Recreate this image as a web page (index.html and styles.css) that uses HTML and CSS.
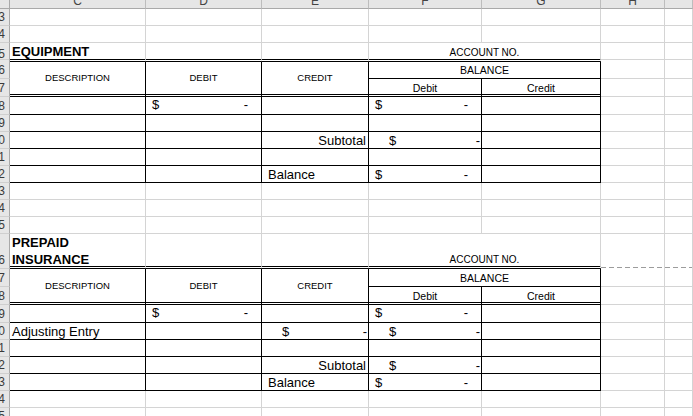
FILE: index.html
```html
<!DOCTYPE html>
<html>
<head>
<meta charset="utf-8">
<title>Ledger</title>
<link rel="stylesheet" href="styles.css">
</head>
<body>
<div class="sheet">
  <div class="ch corner"></div>
  <div class="ch">C</div><div class="ch">D</div><div class="ch">E</div><div class="ch">F</div><div class="ch">G</div><div class="ch">H</div><div class="ch"></div>

  <div class="rh">3</div><div class="c"></div><div class="c"></div><div class="c"></div><div class="c"></div><div class="c"></div><div class="c"></div><div class="c"></div>
  <div class="rh">4</div><div class="c"></div><div class="c"></div><div class="c"></div><div class="c"></div><div class="c"></div><div class="c"></div><div class="c"></div>

  <div class="rh gl">5</div>
  <div class="c dbl title">EQUIPMENT</div>
  <div class="c dbl"></div>
  <div class="c dbl"></div>
  <div class="c dbl acct span2c">ACCOUNT NO.</div>
  <div class="c gl"></div><div class="c gl"></div>

  <div class="rh">6</div>
  <div class="c span2r tr dbl hdr">DESCRIPTION</div>
  <div class="c span2r tr dbl hdr">DEBIT</div>
  <div class="c span2r tr dbl hdr">CREDIT</div>
  <div class="c span2c tr tb bal">BALANCE</div>
  <div class="c"></div><div class="c"></div>

  <div class="rh">7</div>
  <div class="c tr dbl sub">Debit</div>
  <div class="c tr dbl sub">Credit</div>
  <div class="c"></div><div class="c"></div>

  <div class="rh">8</div>
  <div class="c tr tb"></div>
  <div class="c tr tb money low"><span>$</span><span>-</span></div>
  <div class="c tr tb"></div>
  <div class="c tr tb money low"><span>$</span><span>-</span></div>
  <div class="c tr tb"></div>
  <div class="c"></div><div class="c"></div>

  <div class="rh">9</div>
  <div class="c tr tb"></div><div class="c tr tb"></div><div class="c tr tb"></div><div class="c tr tb"></div><div class="c tr tb"></div>
  <div class="c"></div><div class="c"></div>

  <div class="rh">10</div>
  <div class="c tr tb"></div>
  <div class="c tr tb"></div>
  <div class="c tr tb rt">Subtotal</div>
  <div class="c tr tb money2"><span>$</span><span>-</span></div>
  <div class="c tr tb"></div>
  <div class="c"></div><div class="c"></div>

  <div class="rh">11</div>
  <div class="c tr tb"></div><div class="c tr tb"></div><div class="c tr tb"></div><div class="c tr tb"></div><div class="c tr tb"></div>
  <div class="c"></div><div class="c"></div>

  <div class="rh">12</div>
  <div class="c tr tb"></div>
  <div class="c tr tb"></div>
  <div class="c tr tb lbl">Balance</div>
  <div class="c tr tb money"><span>$</span><span>-</span></div>
  <div class="c tr tb"></div>
  <div class="c"></div><div class="c"></div>

  <div class="rh">13</div><div class="c"></div><div class="c"></div><div class="c"></div><div class="c"></div><div class="c"></div><div class="c"></div><div class="c"></div>
  <div class="rh">14</div><div class="c"></div><div class="c"></div><div class="c"></div><div class="c"></div><div class="c"></div><div class="c"></div><div class="c"></div>
  <div class="rh">15</div><div class="c"></div><div class="c"></div><div class="c"></div><div class="c"></div><div class="c"></div><div class="c"></div><div class="c"></div>

  <div class="rh">16</div>
  <div class="c dbl title wrap"><span>PREPAID<br>INSURANCE</span></div>
  <div class="c dbl"></div>
  <div class="c dbl"></div>
  <div class="c dbl acct span2c">ACCOUNT NO.</div>
  <div class="c pb"></div><div class="c pb"></div>

  <div class="rh">17</div>
  <div class="c span2r tr dbl hdr">DESCRIPTION</div>
  <div class="c span2r tr dbl hdr">DEBIT</div>
  <div class="c span2r tr dbl hdr">CREDIT</div>
  <div class="c span2c tr tb bal">BALANCE</div>
  <div class="c"></div><div class="c"></div>

  <div class="rh">18</div>
  <div class="c tr dbl sub">Debit</div>
  <div class="c tr dbl sub">Credit</div>
  <div class="c"></div><div class="c"></div>

  <div class="rh">19</div>
  <div class="c tr tb"></div>
  <div class="c tr tb money low"><span>$</span><span>-</span></div>
  <div class="c tr tb"></div>
  <div class="c tr tb money low"><span>$</span><span>-</span></div>
  <div class="c tr tb"></div>
  <div class="c"></div><div class="c"></div>

  <div class="rh">20</div>
  <div class="c tr tb">Adjusting Entry</div>
  <div class="c tr tb"></div>
  <div class="c tr tb money2"><span>$</span><span>-</span></div>
  <div class="c tr tb money2"><span>$</span><span>-</span></div>
  <div class="c tr tb"></div>
  <div class="c"></div><div class="c"></div>

  <div class="rh">21</div>
  <div class="c tr tb"></div><div class="c tr tb"></div><div class="c tr tb"></div><div class="c tr tb"></div><div class="c tr tb"></div>
  <div class="c"></div><div class="c"></div>

  <div class="rh">22</div>
  <div class="c tr tb"></div>
  <div class="c tr tb"></div>
  <div class="c tr tb rt">Subtotal</div>
  <div class="c tr tb money2"><span>$</span><span>-</span></div>
  <div class="c tr tb"></div>
  <div class="c"></div><div class="c"></div>

  <div class="rh">23</div>
  <div class="c tr tb"></div>
  <div class="c tr tb"></div>
  <div class="c tr tb lbl">Balance</div>
  <div class="c tr tb money"><span>$</span><span>-</span></div>
  <div class="c tr tb"></div>
  <div class="c"></div><div class="c"></div>

  <div class="rh">24</div><div class="c"></div><div class="c"></div><div class="c"></div><div class="c"></div><div class="c"></div><div class="c"></div><div class="c"></div>
  <div class="rh">25</div><div class="c"></div><div class="c"></div><div class="c"></div><div class="c"></div><div class="c"></div><div class="c"></div><div class="c"></div>
</div>
</body>
</html>
```

FILE: styles.css
```css
html, body {
  margin: 0;
  padding: 0;
  background: #fff;
}
body {
  width: 693px;
  height: 416px;
  overflow: hidden;
}
.sheet {
  display: grid;
  grid-template-columns: 10px 136px 116px 107px 113px 119px 64px 1fr;
  grid-template-rows: 21px 17px 17px 19px 17px 18px 18px repeat(7, 17px) 35px 18px 18px 18px repeat(6, 17px);
  margin-top: -12px;
  font-family: "Liberation Sans", Arial, sans-serif;
  color: #000;
}
.ch, .rh, .c {
  box-sizing: border-box;
  display: flex;
  align-items: flex-end;
  min-width: 0;
  white-space: nowrap;
}

/* column headers */
.ch {
  background: #e6e6e6;
  border-right: 1px solid #bdbdbd;
  border-bottom: 1px solid #a9a9a9;
  justify-content: center;
  font-size: 12px;
  line-height: 12px;
  padding-bottom: 1px;
  color: #444;
  overflow: hidden;
}
.corner {
  border-right-color: #a9a9a9;
}

/* row headers */
.rh {
  background-color: #e6e6e6;
  border-right: 1px solid #a9a9a9;
  border-bottom: 1px solid #cfcfcf;
  justify-content: flex-end;
  padding: 0 4px 2px 0;
  overflow: hidden;
  font-size: 12px;
  line-height: 12px;
  color: #3a3a3a;
}

/* cells */
.c {
  border-right: 1px solid #d4d4d4;
  border-bottom: 1px solid #d4d4d4;
  padding: 0 2px;
  font-size: 13px;
  line-height: 14px;
}
.tr { border-right-color: #000; }
.tb { border-bottom-color: #000; }
.dbl { border-bottom: 3px double #000; }

.gl {
  border-bottom: 0;
  background-image: linear-gradient(#d4d4d4, #d4d4d4);
  background-size: 100% 1px;
  background-position: 0 calc(100% - 2px);
  background-repeat: no-repeat;
}
.rh.gl {
  background-image: linear-gradient(#cfcfcf, #cfcfcf);
}
.pb {
  border-bottom: 0;
  background-image: repeating-linear-gradient(to right, #9c9c9c 0 5px, transparent 5px 8px);
  background-size: 100% 1px;
  background-position: 0 calc(100% - 1px);
  background-repeat: no-repeat;
}

.span2r { grid-row: span 2; }
.span2c { grid-column: span 2; }

.title {
  font-weight: bold;
}
.wrap {
  white-space: normal;
  line-height: 17px;
}
.wrap span {
  margin-bottom: -2px;
}
.acct {
  justify-content: center;
  font-size: 10px;
  line-height: 12px;
}
.hdr {
  justify-content: center;
  align-items: center;
  font-size: 9.5px;
  line-height: 12px;
}
.bal {
  justify-content: center;
  align-items: center;
  font-size: 10.5px;
  line-height: 12px;
}
.sub {
  justify-content: center;
  font-size: 10.5px;
  line-height: 12px;
}
.money {
  justify-content: space-between;
  padding: 0 13px 0 6px;
}
.money2 {
  justify-content: space-between;
  padding: 0 1px 0 20px;
}
.low {
  padding-bottom: 2px;
}
.rt {
  justify-content: flex-end;
}
.lbl {
  padding-left: 6px;
}
```
